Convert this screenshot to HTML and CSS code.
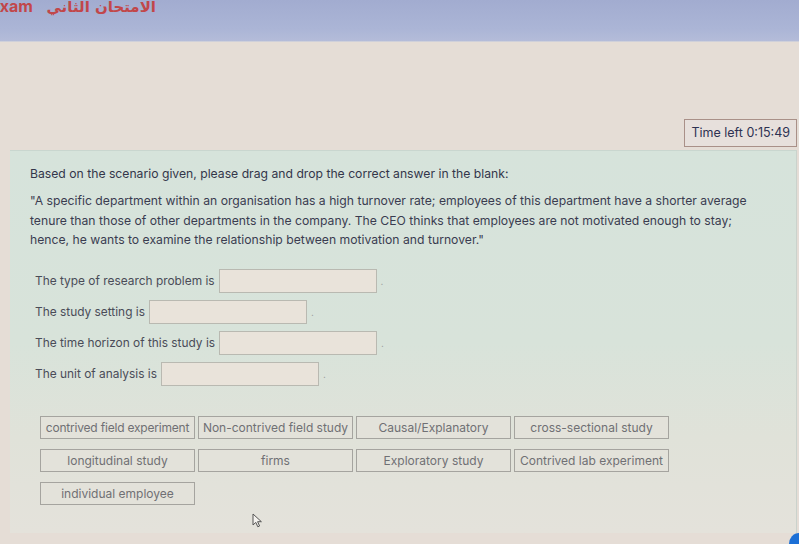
FILE: index.html
```html
<!DOCTYPE html>
<html lang="en">
<head>
<meta charset="utf-8">
<title>Exam</title>
<link rel="stylesheet" href="styles.css">
</head>
<body>
<header class="topbar">
  <h1 class="title"><span class="en">Exam</span> <span class="ar" lang="ar" dir="rtl">الامتحان الثاني</span></h1>
</header>
<main class="page">
  <div class="timer-row"><div class="timer">Time left 0:15:49</div></div>
  <section class="formulation">
    <p class="prompt">Based on the scenario given, please drag and drop the correct answer in the blank:</p>
    <p class="scenario">"A specific department within an organisation has a high turnover rate; employees of this department have a shorter average tenure than those of other departments in the company. The CEO thinks that employees are not motivated enough to stay; hence, he wants to examine the relationship between motivation and turnover."</p>
    <div class="blanks">
      <div class="blank-row"><span class="label">The type of research problem is</span><span class="drop"></span><span class="dot">.</span></div>
      <div class="blank-row"><span class="label">The study setting is</span><span class="drop"></span><span class="dot">.</span></div>
      <div class="blank-row"><span class="label">The time horizon of this study is</span><span class="drop"></span><span class="dot">.</span></div>
      <div class="blank-row"><span class="label">The unit of analysis is</span><span class="drop"></span><span class="dot">.</span></div>
    </div>
    <div class="choices">
      <div class="choice tight">contrived field experiment</div>
      <div class="choice">Non-contrived field study</div>
      <div class="choice">Causal/Explanatory</div>
      <div class="choice">cross-sectional study</div>
      <div class="choice">longitudinal study</div>
      <div class="choice">firms</div>
      <div class="choice">Exploratory study</div>
      <div class="choice">Contrived lab experiment</div>
      <div class="choice">individual employee</div>
    </div>
    <svg class="cursor" width="11" height="15" viewBox="0 0 11 15" aria-hidden="true">
      <path d="M1 1 L1 12 L3.8 9.4 L5.8 13.8 L7.6 13 L5.6 8.7 L9.4 8.7 Z" fill="#f4f2ee" stroke="#555" stroke-width="1" stroke-linejoin="round"/>
    </svg>
  </section>
</main>
<div class="fab"></div>
</body>
</html>
```
FILE: styles.css
```css
html, body {
  margin: 0;
  padding: 0;
}
body {
  width: 799px;
  height: 544px;
  overflow: hidden;
  position: relative;
  background: #e5ddd6;
  font-family: Inter, "Noto Sans", "DejaVu Sans", sans-serif;
  color: #3b3d4a;
}
.topbar {
  height: 41px;
  background: linear-gradient(180deg, #a2acd0 0%, #abb5d6 70%, #b4bcd9 100%);
  overflow: hidden;
  border-bottom: 1px solid #cfd0da;
}
.title {
  margin: -5px 0 0 -10px;
  font-family: "DejaVu Sans", "Noto Sans", sans-serif;
  font-size: 16px;
  font-weight: 600;
  line-height: 22px;
  color: #c1474a;
  white-space: nowrap;
}
.title .en {
  font-family: Inter, "Noto Sans", sans-serif;
  font-size: 16px;
  font-weight: 700;
}
.title .ar {
  margin-left: 8px;
  display: inline-block;
  font-size: 15px;
  font-weight: 700;
}
.page {
  padding: 0 2px 0 10px;
}
.timer-row {
  display: flex;
  justify-content: flex-end;
  padding-top: 77px;
  height: 28px;
}
.timer {
  box-sizing: border-box;
  height: 28px;
  padding: 0 6px;
  border: 1px solid #a99088;
  font-size: 12.5px;
  line-height: 26px;
  color: #2e3252;
  background: #e7e0dc;
}
.formulation {
  position: relative;
  margin-top: 3px;
  height: 383px;
  padding: 13px 20px 0 20px;
  box-sizing: border-box;
  border-top: 1px solid #c9d6cf;
  border-right: 1px solid #cad2cc;
  background: linear-gradient(180deg, #d6e3db 0%, #d8e3da 50%, #e0e2d9 75%, #e4e2db 100%);
}
.prompt {
  margin: 0 0 8px 0;
  font-size: 12.2px;
  line-height: 19px;
  color: #33364a;
}
.scenario {
  margin: 0;
  font-size: 12.2px;
  line-height: 19.5px;
  color: #3a3c50;
  width: 726px;
}
.blanks {
  margin-top: 19px;
  display: flex;
  flex-direction: column;
  gap: 7px;
  padding-left: 5px;
}
.blank-row {
  display: flex;
  align-items: center;
  height: 24px;
  font-size: 11.9px;
  color: #4a4c58;
}
.label {
  margin-right: 4px;
}
.drop {
  box-sizing: border-box;
  width: 158px;
  height: 24px;
  border: 1px solid #b9b9b1;
  background: #e9e3da;
}
.dot {
  margin-left: 4px;
  font-size: 10px;
  color: #999;
}
.choices {
  margin-top: 30px;
  padding-left: 10px;
  display: grid;
  grid-template-columns: repeat(4, 155px);
  column-gap: 3px;
  row-gap: 10px;
}
.choice {
  box-sizing: border-box;
  height: 23px;
  border: 1px solid #a5a49f;
  background: #e3e2da;
  font-size: 12px;
  line-height: 21px;
  text-align: center;
  color: #707074;
  white-space: nowrap;
  overflow: hidden;
}
.choice.tight {
  letter-spacing: -0.2px;
}
.cursor {
  position: absolute;
  left: 242px;
  top: 362px;
}
.fab {
  position: absolute;
  left: 789px;
  top: 533px;
  width: 10px;
  height: 11px;
  border-top-left-radius: 100%;
  background: #1b6fd6;
}
```
